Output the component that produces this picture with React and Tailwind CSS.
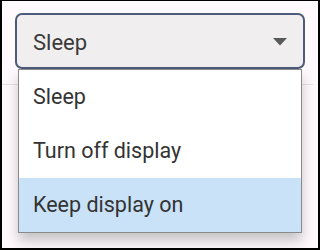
import React from "react";

export default function App() {
  const items = ["Sleep", "Turn off display", "Keep display on"];
  return (
    <div
      className="w-[320px] h-[250px] bg-[#fdf9fc] border-x-2 border-b-2 border-t border-black overflow-hidden"
      style={{ fontFamily: "Roboto, 'Liberation Sans', sans-serif" }}
    >
      <div className="pt-[12px] px-[13px]">
        <div className="relative">
          <div className="h-[56px] rounded-[7px] border-2 border-[#4d5b7a] bg-[#f1eeef] flex items-center justify-between pl-[16px] pr-[15px]">
            <span className="text-[22px] text-[#3a3a3a] pt-[3px]">Sleep</span>
            <svg width="16" height="8" viewBox="0 0 16 8" className="mt-[2px]">
              <path d="M1 0 L15 0 L8 7.5 Z" fill="#58595b" />
            </svg>
          </div>
          <div className="absolute top-full left-[3px] right-[3px] z-10 bg-white border border-[#8a8a8a] shadow-[0_8px_12px_rgba(0,0,0,0.22)]">
            {items.map((t, i) => (
              <div
                key={t}
                className={
                  "h-[54px] flex items-center pl-[14px] text-[21.5px] text-[#333333] " +
                  (i === 2 ? "bg-[#c9e2f8]" : "")
                }
              >
                {t}
              </div>
            ))}
          </div>
        </div>
      </div>
      <div className="mt-[15px] h-px bg-[#e4e0e3] mr-[5px]" />
    </div>
  );
}
